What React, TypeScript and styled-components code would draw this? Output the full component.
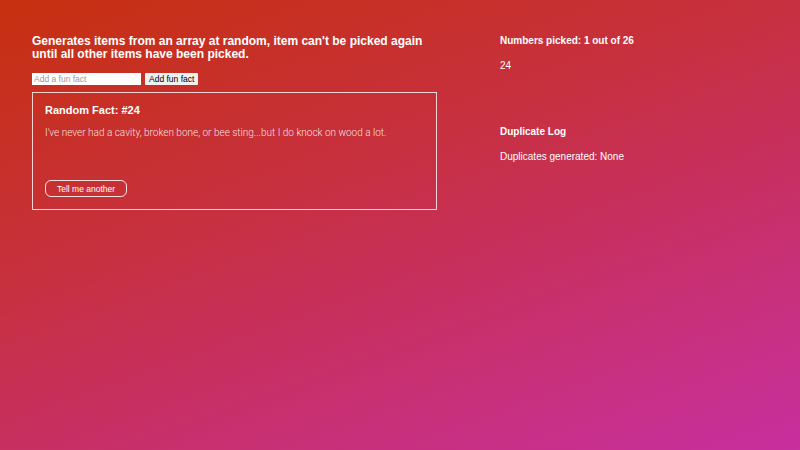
import React, { useState } from "react";
import styled, { createGlobalStyle } from "styled-components";

const GlobalStyle = createGlobalStyle`
  html, body {
    margin: 0;
    padding: 0;
    height: 100%;
  }
  body {
    font-family: "Liberation Sans", Arial, sans-serif;
    color: #fff;
  }
`;

const facts = [
  "I've never had a cavity, broken bone, or bee sting...but I do knock on wood a lot.",
];

export default function App() {
  const [fact, setFact] = useState("");
  return (
    <>
      <GlobalStyle />
      <StyledPage>
        <StyledMain>
          <StyledIntro>
            Generates items from an array at random, item can't be picked again
            until all other items have been picked.
          </StyledIntro>
          <StyledForm onSubmit={(e) => e.preventDefault()}>
            <StyledInput
              placeholder="Add a fun fact"
              value={fact}
              onChange={(e) => setFact(e.target.value)}
            />
            <StyledAddButton type="submit">Add fun fact</StyledAddButton>
          </StyledForm>
          <StyledCard>
            <StyledCardTitle>Random Fact: #24</StyledCardTitle>
            <StyledFact>{facts[0]}</StyledFact>
            <StyledAnotherButton>Tell me another</StyledAnotherButton>
          </StyledCard>
        </StyledMain>
        <StyledSide>
          <StyledSideTitle>Numbers picked: 1 out of 26</StyledSideTitle>
          <StyledSideText>24</StyledSideText>
          <StyledLog>
            <StyledSideTitle>Duplicate Log</StyledSideTitle>
            <StyledSideText>Duplicates generated: None</StyledSideText>
          </StyledLog>
        </StyledSide>
      </StyledPage>
    </>
  );
}

const StyledPage = styled.div`
  box-sizing: border-box;
  min-height: 100vh;
  display: grid;
  grid-template-columns: 405px 1fr;
  column-gap: 63px;
  align-items: start;
  padding: 34px 32px;
  background: linear-gradient(160deg, #c7300f 0%, #c73040 40%, #c82f9f 100%);
`;

const StyledMain = styled.div`
  display: flex;
  flex-direction: column;
`;

const StyledIntro = styled.h1`
  margin: 1px 0 0;
  font-size: 12px;
  line-height: 13px;
  font-weight: 700;
`;

const StyledForm = styled.form`
  display: flex;
  gap: 4px;
  margin-top: 12px;
`;

const StyledInput = styled.input`
  box-sizing: border-box;
  width: 109px;
  height: 12px;
  padding: 0 2px;
  border: none;
  font-family: "Liberation Sans", Arial, sans-serif;
  font-size: 8.5px;
  color: #333;
  background: #fff;
  outline: none;
  &::placeholder {
    color: #9a9a9a;
  }
`;

const StyledAddButton = styled.button`
  box-sizing: border-box;
  height: 12px;
  padding: 0 4px;
  border: none;
  border-radius: 1px;
  background: #f0f0f0;
  font-family: "Liberation Sans", Arial, sans-serif;
  font-size: 8.5px;
  color: #000;
`;

const StyledCard = styled.section`
  box-sizing: border-box;
  margin-top: 7px;
  height: 118px;
  padding: 11px 12px 12px;
  border: 1px solid rgba(255, 255, 255, 0.8);
  display: flex;
  flex-direction: column;
  align-items: flex-start;
`;

const StyledCardTitle = styled.h2`
  margin: 0;
  font-size: 11px;
  line-height: 13px;
  font-weight: 700;
`;

const StyledFact = styled.p`
  margin: 9px 0 0;
  font-family: Roboto, "Liberation Sans", sans-serif;
  font-weight: 300;
  font-size: 10px;
  line-height: 13px;
  color: rgba(255, 255, 255, 0.88);
`;

const StyledAnotherButton = styled.button`
  margin-top: auto;
  height: 17px;
  padding: 0 11px;
  border: 1px solid rgba(255, 255, 255, 0.85);
  border-radius: 6px;
  background: transparent;
  color: #fff;
  font-family: "Liberation Sans", Arial, sans-serif;
  font-size: 8.5px;
`;

const StyledSide = styled.aside`
  display: flex;
  flex-direction: column;
`;

const StyledSideTitle = styled.h3`
  margin: 0;
  font-size: 10px;
  line-height: 13px;
  font-weight: 700;
`;

const StyledSideText = styled.p`
  margin: 12px 0 0;
  font-size: 10px;
  line-height: 13px;
`;

const StyledLog = styled.div`
  margin-top: 53px;
`;
